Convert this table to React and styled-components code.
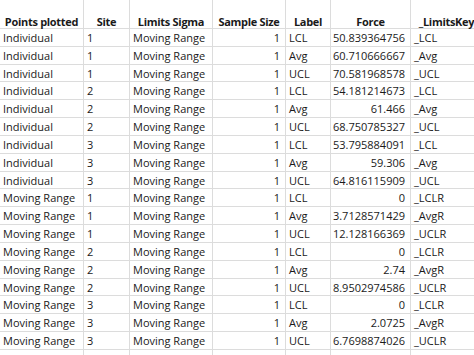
import React from "react";
import styled, { createGlobalStyle } from "styled-components";

const Global = createGlobalStyle`
  html, body { margin: 0; padding: 0; background: #fff; }
  body { overflow: hidden; }
`;

const COLS = "84px 46px 83px 73px 45px 80px 72px";

const Sheet = styled.div`
  width: 474px;
  height: 355px;
  overflow: hidden;
  font-family: "Open Sans", "Noto Sans", sans-serif;
  font-size: 11px;
  color: #1a1a1a;
`;

const Row = styled.div`
  display: grid;
  grid-template-columns: ${COLS};
  height: ${(p) => (p.$head ? "29px" : "17.83px")};
  box-sizing: border-box;
  border-bottom: 1px solid #dcdcdc;
`;

const Cell = styled.div`
  box-sizing: border-box;
  border-right: 1px solid #dcdcdc;
  padding: 0 ${(p) => (p.$align === "right" ? "5px" : "3px")} 0 3px;
  display: flex;
  align-items: center;
  justify-content: ${(p) =>
    p.$align === "right" ? "flex-end" : p.$align === "center" ? "center" : "flex-start"};
  white-space: nowrap;
  overflow: visible;
  line-height: 1;
`;

const HeadCell = styled(Cell)`
  font-weight: 700;
  letter-spacing: -0.3px;
  align-items: flex-end;
  padding-bottom: 1px;
  justify-content: center;
`;

const headers = ["Points plotted", "Site", "Limits Sigma", "Sample Size", "Label", "Force", "_LimitsKey"];

const data = [
  ["Individual", "1", "LCL", "50.839364756", "_LCL"],
  ["Individual", "1", "Avg", "60.710666667", "_Avg"],
  ["Individual", "1", "UCL", "70.581968578", "_UCL"],
  ["Individual", "2", "LCL", "54.181214673", "_LCL"],
  ["Individual", "2", "Avg", "61.466", "_Avg"],
  ["Individual", "2", "UCL", "68.750785327", "_UCL"],
  ["Individual", "3", "LCL", "53.795884091", "_LCL"],
  ["Individual", "3", "Avg", "59.306", "_Avg"],
  ["Individual", "3", "UCL", "64.816115909", "_UCL"],
  ["Moving Range", "1", "LCL", "0", "_LCLR"],
  ["Moving Range", "1", "Avg", "3.7128571429", "_AvgR"],
  ["Moving Range", "1", "UCL", "12.128166369", "_UCLR"],
  ["Moving Range", "2", "LCL", "0", "_LCLR"],
  ["Moving Range", "2", "Avg", "2.74", "_AvgR"],
  ["Moving Range", "2", "UCL", "8.9502974586", "_UCLR"],
  ["Moving Range", "3", "LCL", "0", "_LCLR"],
  ["Moving Range", "3", "Avg", "2.0725", "_AvgR"],
  ["Moving Range", "3", "UCL", "6.7698874026", "_UCLR"],
];

export default function App() {
  return (
    <>
      <Global />
      <Sheet>
        <Row $head>
          {headers.map((h) => (
            <HeadCell key={h}>{h}</HeadCell>
          ))}
        </Row>
        {data.map((r, i) => (
          <Row key={i}>
            <Cell>{r[0]}</Cell>
            <Cell>{r[1]}</Cell>
            <Cell>Moving Range</Cell>
            <Cell $align="right">1</Cell>
            <Cell>{r[2]}</Cell>
            <Cell $align="right">{r[3]}</Cell>
            <Cell>{r[4]}</Cell>
          </Row>
        ))}
        <Row>
          {headers.map((h) => (
            <Cell key={h} />
          ))}
        </Row>
      </Sheet>
    </>
  );
}
